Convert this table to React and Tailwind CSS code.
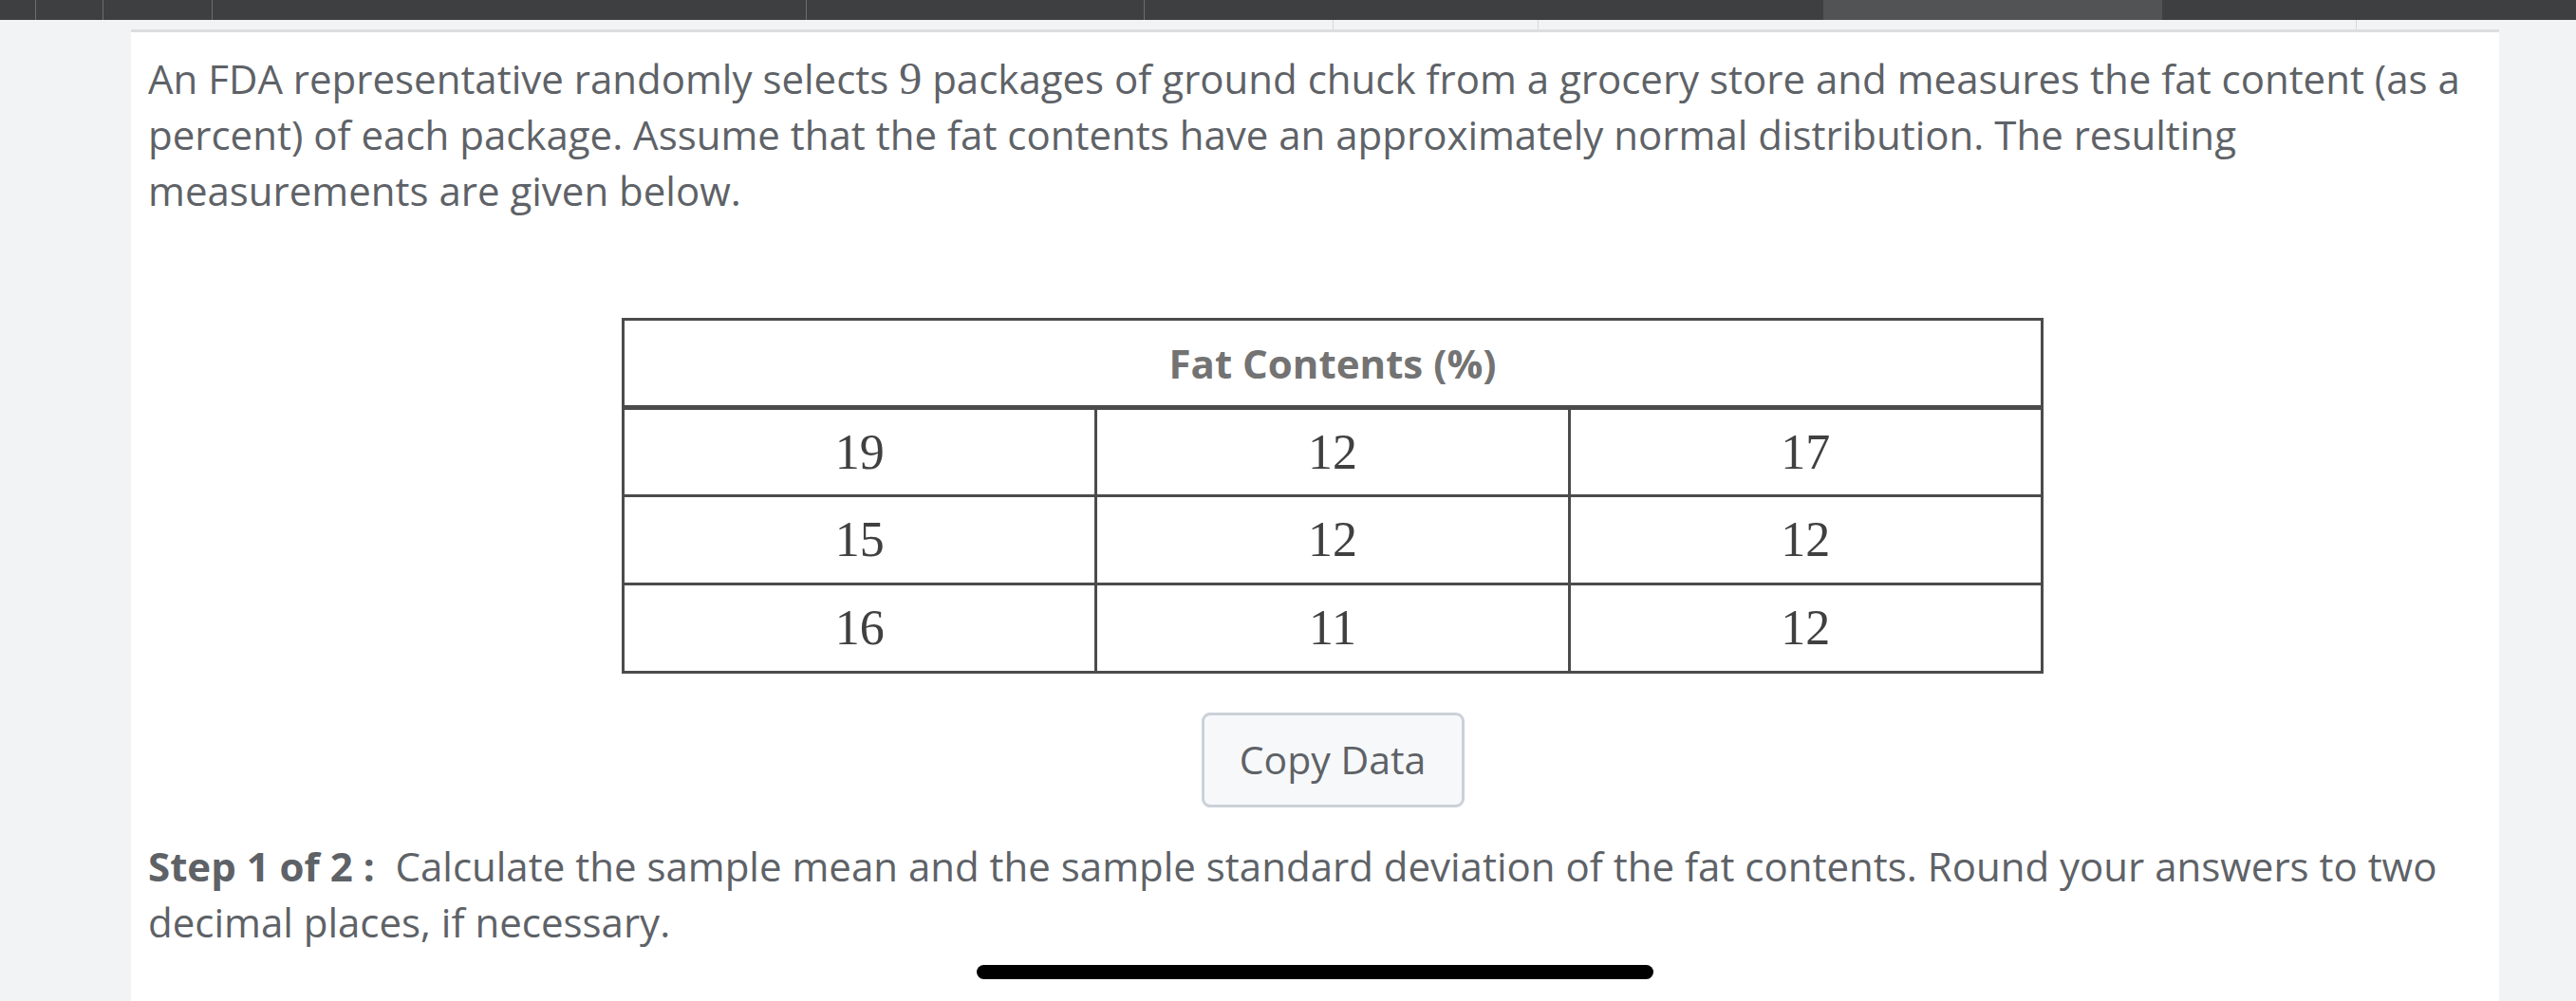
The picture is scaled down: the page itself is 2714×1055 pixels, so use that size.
import React from "react";

const rows = [
  ["19", "12", "17"],
  ["15", "12", "12"],
  ["16", "11", "12"],
];

const App = () => {
  return (
    <div className="flex flex-col h-[1055px] w-[2714px] overflow-hidden bg-[#f2f3f5] font-['Open_Sans',sans-serif]">
      {/* toolbar */}
      <div className="flex h-[21px] bg-[#3e3f41]">
        <div className="w-[38px] border-r border-[#6c6d6f]" />
        <div className="w-[71px] border-r border-[#6c6d6f]" />
        <div className="w-[115px] border-r border-[#6c6d6f]" />
        <div className="w-[626px] border-r border-[#6c6d6f]" />
        <div className="w-[356px] border-r border-[#6c6d6f]" />
        <div className="w-[715px]" />
        <div className="w-[357px] bg-[#525355]" />
        <div className="flex-1" />
      </div>
      <div className="flex h-[10px]">
        <div className="w-[1405px] border-r border-[#d6d7d9]" />
        <div className="w-[216px] border-r border-[#d6d7d9]" />
        <div className="w-[862px] border-r border-[#d6d7d9]" />
      </div>

      {/* question panel */}
      <main className="ml-[138px] w-[2495px] flex-1 flex flex-col bg-white border-t-[3px] border-[#dcdddf] pl-[18px]">
        <p className="w-[2460px] pt-[19px] text-[42px] leading-[59px] text-[#5e6267]">
          An FDA representative randomly selects{" "}
          <span className="font-['Liberation_Serif',serif] text-[48px]">9</span>{" "}
          packages of ground chuck from a grocery store and measures the fat content (as a percent) of each
          package. Assume that the fat contents have an approximately normal distribution. The resulting
          measurements are given below.
        </p>

        <div className="w-[2496px] flex flex-col items-center">
          <table className="mt-[105px] w-[1498px] border-collapse table-fixed">
            <thead>
              <tr>
                <th
                  colSpan={3}
                  className="h-[93px] border-[3px] border-b-[5px] border-[#4b4b4b] text-[42px] font-bold text-[#737373]"
                >
                  Fat Contents (%)
                </th>
              </tr>
            </thead>
            <tbody>
              {rows.map((r, i) => (
                <tr key={i}>
                  {r.map((v, j) => (
                    <td
                      key={j}
                      className="h-[93px] border-[3px] border-[#4b4b4b] text-center font-['Liberation_Serif',serif] text-[52px] text-[#404040]"
                    >
                      {v}
                    </td>
                  ))}
                </tr>
              ))}
            </tbody>
          </table>

          <button className="mt-[41px] w-[277px] h-[100px] rounded-[9px] border-[3px] border-[#cbd1d8] bg-[#f7f8fa] text-[41px] text-[#5e6267]">
            Copy Data
          </button>
        </div>

        <p className="w-[2460px] mt-[32px] text-[42px] leading-[59px] text-[#5e6267]">
          <span className="font-bold">Step 1 of 2 :</span>&nbsp; Calculate the sample mean and the sample standard
          deviation of the fat contents. Round your answers to two decimal places, if necessary.
        </p>

        <div className="mt-auto mb-[23px] flex justify-center pr-[18px]">
          <div className="w-[713px] h-[15px] rounded-full bg-black" />
        </div>
      </main>
    </div>
  );
};

export default App;
